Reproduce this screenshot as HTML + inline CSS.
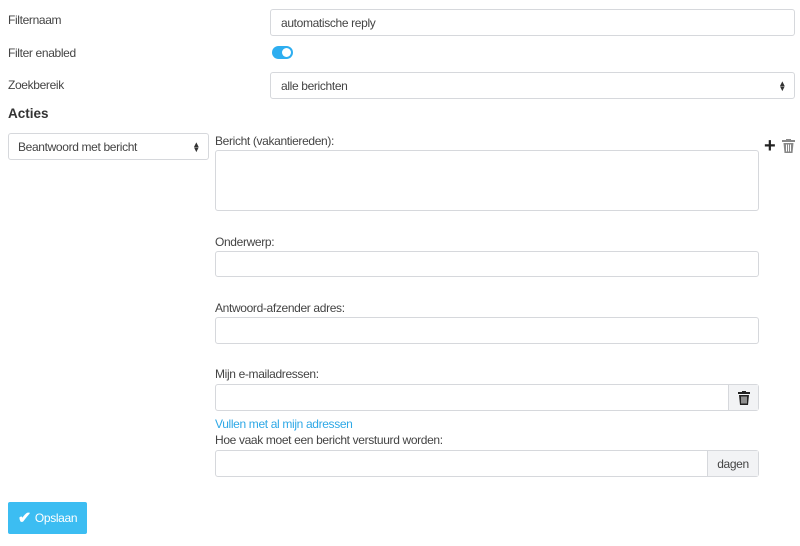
<!DOCTYPE html>
<html><head><style>
body{margin:0;width:800px;height:546px;background:#fff;font-family:"Liberation Sans",sans-serif;font-size:12px;letter-spacing:-0.35px;color:#444;position:relative;overflow:hidden}
.a{position:absolute}
.in{position:absolute;box-sizing:border-box;border:1px solid #d6d8dc;border-radius:3px;background:#fff}
.lb{position:absolute;line-height:14px}
.addon{position:absolute;top:0;bottom:0;right:0;background:#f2f3f5;border-left:1px solid #d6d8dc;display:flex;align-items:center;justify-content:center;color:#444}
.arr{position:absolute;right:8px;top:8px;font-size:8px;line-height:5px;color:#333}
</style></head><body>
<div class="lb" style="left:8px;top:13px">Filternaam</div>
<div class="in" style="left:270px;top:9px;width:525px;height:27px"><span class="a" style="left:10px;top:6px">automatische reply</span></div>
<div class="lb" style="left:8px;top:46px">Filter enabled</div>
<div class="a" style="left:272px;top:46px;width:21px;height:13px;border-radius:7px;background:#2eaef0"><div class="a" style="right:2px;top:2px;width:9px;height:9px;border-radius:50%;background:#fff"></div></div>
<div class="lb" style="left:8px;top:78px">Zoekbereik</div>
<div class="in" style="left:270px;top:72px;width:525px;height:27px"><span class="a" style="left:10px;top:6px">alle berichten</span><div class="arr">▲<br>▼</div></div>
<div class="lb" style="left:8px;top:107px;font-weight:bold;font-size:13.5px;color:#333;letter-spacing:0">Acties</div>
<div class="in" style="left:8px;top:133px;width:201px;height:27px"><span class="a" style="left:9px;top:6px">Beantwoord met bericht</span><div class="arr">▲<br>▼</div></div>
<div class="lb" style="left:215px;top:134px">Bericht (vakantiereden):</div>
<div class="in" style="left:215px;top:150px;width:544px;height:61px"></div>
<div class="a" style="left:764px;top:137px;font-size:20px;font-weight:bold;color:#222;line-height:18px">+</div>
<svg class="a" style="left:782px;top:139px" width="13" height="14" viewBox="0 0 13 14"><rect x="0" y="1" width="13" height="2" fill="#888"/><rect x="4" y="0" width="5" height="2" fill="#888"/><path d="M1.5 4h10l-1 10h-8z" fill="#888"/><path d="M4.5 5.5v7M6.5 5.5v7M8.5 5.5v7" stroke="#fff" stroke-width="1"/></svg>
<div class="lb" style="left:215px;top:235px">Onderwerp:</div>
<div class="in" style="left:215px;top:251px;width:544px;height:26px"></div>
<div class="lb" style="left:215px;top:301px">Antwoord-afzender adres:</div>
<div class="in" style="left:215px;top:317px;width:544px;height:27px"></div>
<div class="lb" style="left:215px;top:367px">Mijn e-mailadressen:</div>
<div class="in" style="left:215px;top:384px;width:544px;height:27px"><div class="addon" style="width:29px"><svg width="12" height="14" viewBox="0 0 12 14"><rect x="0" y="1" width="12" height="2" fill="#222"/><rect x="4" y="0" width="4" height="2" fill="#222"/><path d="M1 4h10l-1 10h-8z" fill="#222"/><path d="M4 5.5v7M6 5.5v7M8 5.5v7" stroke="#fff" stroke-width="1"/></svg></div></div>
<div class="lb" style="left:215px;top:417px;color:#2ea8e6">Vullen met al mijn adressen</div>
<div class="lb" style="left:215px;top:433px">Hoe vaak moet een bericht verstuurd worden:</div>
<div class="in" style="left:215px;top:450px;width:544px;height:27px"><div class="addon" style="width:50px">dagen</div></div>
<div class="a" style="left:8px;top:502px;width:79px;height:32px;background:#3cbdf2;border-radius:2px;color:#fff;display:flex;align-items:center;justify-content:center;font-size:12px"><span style="font-weight:bold;font-size:16px;margin-right:4px">✔</span>Opslaan</div>
</body></html>
